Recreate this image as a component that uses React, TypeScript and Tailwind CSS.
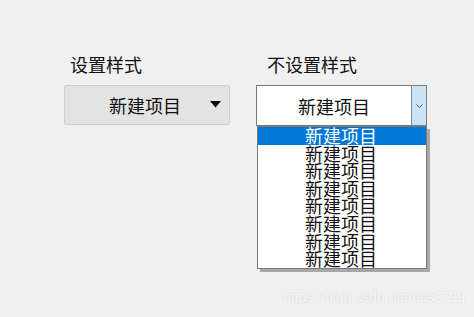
const items = Array.from({ length: 8 }, () => '新建项目')

export default function App() {
  return (
    <div
      className="w-[474px] h-[317px] bg-[#f0f0f0] relative overflow-hidden"
      style={{ fontFamily: '"Noto Sans CJK SC", "Noto Sans", sans-serif' }}
    >
      <div className="flex pt-[52px] pl-[64px] gap-[26px]">
        <div className="flex flex-col w-[166px]">
          <div className="pl-[6px] text-[18px] leading-[24px] text-[#111]">设置样式</div>
          <div className="mt-[9px] h-[40px] bg-[#e3e3e3] border border-[#cfcfcf] rounded-[2px] flex items-center relative">
            <span className="ml-[44px] text-[18px] leading-none text-[#111]">新建项目</span>
            <svg className="absolute left-[145px] top-[15px]" width="11" height="7" viewBox="0 0 11 7">
              <path d="M0 0 H11 L5.5 6.5 Z" fill="#000" />
            </svg>
          </div>
        </div>
        <div className="flex flex-col w-[171px] relative">
          <div className="pl-[11px] text-[18px] leading-[24px] text-[#111]">不设置样式</div>
          <div className="mt-[9px] h-[41px] bg-white border border-[#7a7a7a] flex">
            <div className="flex-1 flex items-center justify-center">
              <span className="text-[18px] leading-none text-[#111]">新建项目</span>
            </div>
            <div className="w-[15px] bg-[#cce4f7] border-l border-[#7a8ea3] flex items-center justify-center">
              <svg width="7" height="4" viewBox="0 0 7 4">
                <path d="M0.5 0.5 L3.5 3.5 L6.5 0.5" stroke="#4a5a6a" strokeWidth="1" fill="none" />
              </svg>
            </div>
          </div>
          <div className="absolute left-[1px] top-[74px] w-[170px] bg-white border border-[#7a7a7a] shadow-[3px_3px_0_#a8a8a8] flex flex-col">
            {items.map((t, i) => (
              <div
                key={i}
                className={`h-[17.6px] text-[18px] leading-[17.6px] text-center pr-[2px] ${
                  i === 0 ? 'bg-[#0078d7] text-white' : 'text-[#111]'
                }`}
              >
                {t}
              </div>
            ))}
          </div>
        </div>
      </div>
      <div
        className="absolute right-[9px] bottom-[9px] text-[14px] text-white/80 [text-shadow:0_0_2px_rgba(0,0,0,0.15)]"
        style={{ fontFamily: 'Arial, "Liberation Sans", sans-serif' }}
      >
        https://blog.csdn.net/hss2799
      </div>
    </div>
  )
}
